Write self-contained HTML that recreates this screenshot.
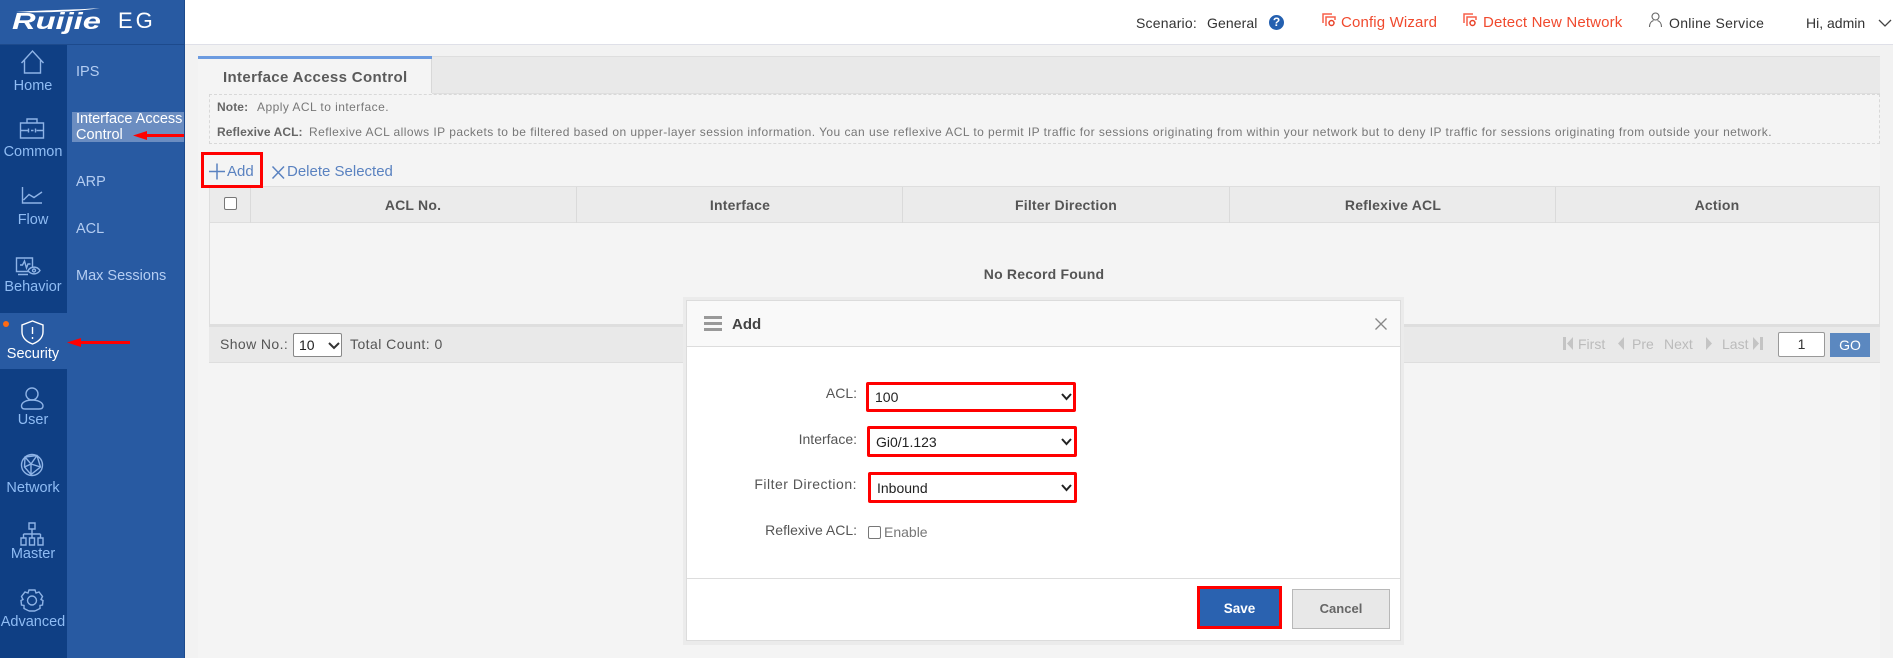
<!DOCTYPE html>
<html><head><meta charset="utf-8"><title>Interface Access Control</title>
<style>
html,body{margin:0;padding:0}
body{width:1893px;height:658px;overflow:hidden;position:relative;background:#f2f2f2;font-family:"Liberation Sans","Noto Sans CJK SC",sans-serif;font-size:14px;color:#555}
.a{position:absolute}
.t{position:absolute;white-space:nowrap;line-height:18px;transform:translateY(-9px)}
.c{transform:translate(-50%,-9px);text-align:center}
.r{transform:translate(-100%,-9px)}
.rail{color:#8fbcf4;font-size:14.5px}
.sub{color:#b4cdf2;font-size:14.5px}
svg{position:absolute;overflow:visible;fill:none}
.ic{stroke:#8eb3e6;stroke-width:1.4}
.th{color:#555;font-weight:bold;font-size:14px;letter-spacing:.2px}
select{position:absolute;appearance:none;-webkit-appearance:none;background:#fff;box-sizing:border-box;border:3px solid #f00;border-radius:2px;font:14px "Liberation Sans",sans-serif;color:#222;padding:0 0 0 6px;margin:0;outline:0}
input{position:absolute;appearance:none;-webkit-appearance:none;box-sizing:border-box;margin:0;padding:0}
.lbl{color:#555;font-size:14px}
.chev{stroke:#222;stroke-width:2}
.red{color:#f04a2e;font-size:15px;letter-spacing:.15px}
.note{font-size:12px;color:#777;letter-spacing:.45px}
.noteb{font-weight:bold;font-size:12px;color:#666;letter-spacing:.1px}
</style></head><body>

<!-- sidebar -->
<div class="a" style="left:0;top:0;width:184px;height:658px;background:#285aa2;border-right:1px solid #1d4a8c"></div>
<div class="a" style="left:0;top:44px;width:184px;height:1px;background:#1d4a8c"></div>
<div class="a" style="left:0;top:45px;width:67px;height:268px;background:#0f3f84"></div>
<div class="a" style="left:0;top:369px;width:67px;height:289px;background:#0f3f84"></div>

<div class="t" style="left:12px;top:21px;font:italic bold 23px/30px 'Liberation Sans',sans-serif;color:#fff;transform:translateY(-15px) scaleX(1.42);transform-origin:0 50%">Ruijie</div>
<svg style="left:0;top:0" width="110" height="20"><path d="M16 12 C40 10 75 10 100 8 C75 12 40 13 16 12Z" fill="#fff"/></svg>
<div class="t" style="left:118px;top:21px;font-size:22px;line-height:24px;color:#fff;letter-spacing:3px;transform:translateY(-12px)">EG</div>

<!-- rail icons -->
<svg class="ic" style="left:0;top:0" width="67" height="658">
<path d="M21.5 63 L32.5 51 L43.5 63 M24.5 60 V73 H40.500 V60"/>
<path d="M20.5 123 H43.5 V138 H20.5 Z M27 123 V119 H37 V123 M20.5 130.5 H28 M31 130.5 H33.5 M36.5 130.5 H43.5 M28.5 128.5 V132.5 M35.5 128.5 V132.5"/>
<path d="M22.5 187 V203 H42 M23.5 200 L29 194.5 L34 197.5 L42 192"/>
<path d="M16.500 258 H32.500 V271.500 H16.500 Z M20 265 H22.500 L24.500 261 L26.500 268 L28 264 H30.500 M18 274.500 H28" />
<path d="M28 270.500 C31 266 37 266 40 270.500 C37 275 31 275 28 270.500Z" fill="#0f3f84"/><circle cx="34" cy="270.500" r="1.500"/>
<path style="stroke:#fff" d="M32.5 321 L43 325 V332 C43 338 38 342 32.5 344 C27 342 22 338 22 332 V325 Z M32.5 327 V334 M32.5 337 V339"/>
<circle cx="32" cy="394" r="6"/>
<path d="M21.5 406 C21.5 402 27 400 32 400 C37 400 43 402 43 406 C43 408.5 41 409 39 409 H25 C23 409 21.5 408.500 21.5 406Z"/>
<circle cx="32" cy="465" r="10.500"/>
<path d="M25 457 L37 455.500 L40.500 467 L31 474.500 L24.500 467 Z M25 457 L31 464 L37 455.500 M31 464 L40.500 467 M31 464 L24.500 467 M31 464 V474.500"/>
<path d="M29 523 H35 V529 H29 Z M32 529 V534 M23.500 534 H40.500 M23.500 534 V538 M32 534 V538 M40.500 534 V538 M21 538 H26 V545 H21 Z M29.500 538 H34.500 V545 H29.500 Z M38 538 H43 V545 H38 Z"/>
<path d="M29 590 H35 L36 593 L39 592 L42.500 596.500 L41 599.500 L43 600.500 L42.500 605 L40 605.500 L40 608.500 L36 610.500 L34.500 611 H29.500 L28 610.500 L24 608.500 L24 605.500 L21.500 605 L21 600.500 L23 599.500 L21.500 596.500 L25 592 L28 593 Z"/>
<circle cx="32" cy="600.500" r="4.500"/>
</svg>
<div class="a" style="left:3px;top:321px;width:6px;height:6px;border-radius:50%;background:#ff6a13"></div>

<div class="t c rail" style="left:33px;top:86px">Home</div>
<div class="t c rail" style="left:33px;top:152px">Common</div>
<div class="t c rail" style="left:33px;top:220px">Flow</div>
<div class="t c rail" style="left:33px;top:287px">Behavior</div>
<div class="t c rail" style="left:33px;top:354px;color:#fff">Security</div>
<div class="t c rail" style="left:33px;top:420px">User</div>
<div class="t c rail" style="left:33px;top:488px">Network</div>
<div class="t c rail" style="left:33px;top:554px">Master</div>
<div class="t c rail" style="left:33px;top:622px">Advanced</div>

<!-- submenu -->
<div class="a" style="left:72px;top:112px;width:112px;height:30px;background:#6b8dc1"></div>
<div class="t sub" style="left:76px;top:72px">IPS</div>
<div class="t sub" style="left:76px;top:119px;color:#fff">Interface Access</div>
<div class="t sub" style="left:76px;top:135px;color:#fff">Control</div>
<div class="t sub" style="left:76px;top:182px">ARP</div>
<div class="t sub" style="left:76px;top:229px">ACL</div>
<div class="t sub" style="left:76px;top:276px">Max Sessions</div>

<!-- red arrows -->
<svg style="left:0;top:0" width="200" height="400">
<path d="M133 135.500 L147 131 V134 H184 V137 H147 V140 Z" fill="#f00"/>
<path d="M67 342.500 L81 338 V341 H130 V344 H81 V347 Z" fill="#f00"/>
</svg>

<!-- top bar -->
<div class="a" style="left:185px;top:0;width:1708px;height:44px;background:#fff;border-bottom:1px solid #dfe0e8"></div>
<div class="t" style="left:1136px;top:23px;color:#333;font-size:14px;letter-spacing:.2px">Scenario:</div>
<div class="t" style="left:1207px;top:23px;color:#333;font-size:14px;letter-spacing:.1px">General</div>
<div class="a" style="left:1269px;top:15px;width:15px;height:15px;border-radius:50%;background:#2460b0;color:#fff;font:bold 12px/15px 'Liberation Sans',sans-serif;text-align:center">?</div>
<svg style="left:1322px;top:13px" width="15" height="15" stroke="#f7604a" stroke-width="1.500">
<path d="M1 10 V1 H10 M4 13 V4 H13 V7"/><circle cx="9.500" cy="10" r="2.500" stroke="#e8432a"/></svg>
<div class="t red" style="left:1341px;top:23px">Config Wizard</div>
<svg style="left:1463px;top:13px" width="15" height="15" stroke="#f7604a" stroke-width="1.500">
<path d="M1 10 V1 H10 M4 13 V4 H13 V7"/><circle cx="9.500" cy="10" r="2.500" stroke="#e8432a"/></svg>
<div class="t red" style="left:1483px;top:23px">Detect New Network</div>
<svg style="left:1649px;top:12px" width="13" height="16" stroke="#666" stroke-width="1.100">
<circle cx="6.500" cy="4.500" r="3.500"/><path d="M0.500 15 C0.500 11 2 9.500 4.500 8.500 M12.500 15 C12.500 11 11 9.500 8.500 8.500"/></svg>
<div class="t" style="left:1669px;top:23px;color:#333;font-size:14px;letter-spacing:.3px">Online Service</div>
<div class="t" style="left:1806px;top:23px;color:#333;font-size:14px">Hi, admin</div>
<svg style="left:1878px;top:19px" width="14" height="9" stroke="#444" stroke-width="1.300"><path d="M1 1 L7 7 L13 1"/></svg>

<!-- main panel -->
<div class="a" style="left:198px;top:56px;width:1682px;height:602px;background:#f4f4f4"></div>
<div class="a" style="left:432px;top:56px;width:1448px;height:36px;background:#e9e9e9;border-top:1px solid #dedede;box-sizing:content-box;border-bottom:1px solid #dedede"></div>
<div class="a" style="left:198px;top:56px;width:233px;height:37px;background:#f4f4f4;border-right:1px solid #d8d8d8"></div>
<div class="a" style="left:198px;top:56px;width:234px;height:3px;background:#6c9be0"></div>
<div class="t" style="left:223px;top:78px;font-weight:bold;font-size:15px;color:#5a5a5a;letter-spacing:.35px">Interface Access Control</div>

<div class="a" style="left:209px;top:94px;width:1671px;height:50px;box-sizing:border-box;border:1px dashed #d8d8d8;"></div>
<div class="t noteb" style="left:217px;top:107px">Note:</div>
<div class="t note" style="left:257px;top:107px">Apply ACL to interface.</div>
<div class="t noteb" style="left:217px;top:132px">Reflexive ACL:</div>
<div class="t note" style="left:309px;top:132px">Reflexive ACL allows IP packets to be filtered based on upper-layer session information. You can use reflexive ACL to permit IP traffic for sessions originating from within your network but to deny IP traffic for sessions originating from outside your network.</div>

<!-- toolbar -->
<div class="a" style="left:201px;top:152px;width:62px;height:36px;box-sizing:border-box;border:3px solid #f00;z-index:3"></div>
<svg style="left:209px;top:163px" width="16" height="18" stroke="#5a82c0" stroke-width="1.500"><path d="M0 8.500 H16 M8 0.500 V16.500"/></svg>
<div class="t" style="left:227px;top:172px;color:#5a82c0;font-size:15px">Add</div>
<svg style="left:272px;top:166px" width="12" height="13" stroke="#5a82c0" stroke-width="1.500"><path d="M0.500 0.500 L12 12.500 M12 0.500 L0.500 12.500"/></svg>
<div class="t" style="left:287px;top:172px;color:#5a82c0;font-size:15px">Delete Selected</div>

<!-- table -->
<div class="a" style="left:209px;top:186px;width:1671px;height:37px;box-sizing:border-box;background:#ebebeb;border:1px solid #dedede"></div>
<div class="a" style="left:209px;top:223px;width:1px;height:101px;background:#dedede"></div>
<div class="a" style="left:1879px;top:223px;width:1px;height:101px;background:#dedede"></div>
<div class="a" style="left:250px;top:187px;width:1px;height:36px;background:#dadada"></div>
<div class="a" style="left:576px;top:187px;width:1px;height:36px;background:#dadada"></div>
<div class="a" style="left:902px;top:187px;width:1px;height:36px;background:#dadada"></div>
<div class="a" style="left:1229px;top:187px;width:1px;height:36px;background:#dadada"></div>
<div class="a" style="left:1555px;top:187px;width:1px;height:36px;background:#dadada"></div>
<input type="checkbox" style="left:224px;top:197px;width:13px;height:13px;border:1px solid #777;border-radius:2px;background:#fff">
<div class="t c th" style="left:413px;top:205px">ACL No.</div>
<div class="t c th" style="left:740px;top:205px">Interface</div>
<div class="t c th" style="left:1066px;top:205px">Filter Direction</div>
<div class="t c th" style="left:1393px;top:205px">Reflexive ACL</div>
<div class="t c th" style="left:1717px;top:205px">Action</div>
<div class="t c th" style="left:1044px;top:274px">No Record Found</div>

<!-- table footer -->
<div class="a" style="left:209px;top:324px;width:1671px;height:39px;box-sizing:border-box;background:#e9e9e9;border-top:3px solid #dedede;border-bottom:1px solid #dedede"></div>
<div class="t lbl" style="left:220px;top:344px;letter-spacing:.4px">Show No.:</div>
<select style="left:293px;top:333px;width:49px;height:24px;border:1px solid #888;font-size:14px;padding-left:5px"><option>10</option></select>
<svg style="left:328px;top:342px" width="12" height="8" class="chev"><path d="M1 1 L6 6 L11 1" stroke="#333" stroke-width="2"/></svg>
<div class="t lbl" style="left:350px;top:344px;letter-spacing:.45px">Total Count: 0</div>

<svg style="left:1563px;top:337px" width="205" height="14" fill="#c4c4c4">
<rect x="0" y="0" width="3" height="13" fill="#c4c4c4"/><path d="M10 0 V13 L4 6.500Z" fill="#c4c4c4"/>
<path d="M61 0 V13 L55 6.500Z" fill="#c4c4c4"/>
<path d="M143 0 V13 L149 6.500Z" fill="#c4c4c4"/>
<path d="M190 0 V13 L196 6.500Z" fill="#c4c4c4"/><rect x="197" y="0" width="3" height="13" fill="#c4c4c4"/></svg>
<div class="t" style="left:1578px;top:344px;color:#bbb;font-size:14px">First</div>
<div class="t" style="left:1632px;top:344px;color:#bbb;font-size:14px">Pre</div>
<div class="t" style="left:1664px;top:344px;color:#bbb;font-size:14px">Next</div>
<div class="t" style="left:1722px;top:344px;color:#bbb;font-size:14px">Last</div>
<div class="a" style="left:1778px;top:332px;width:47px;height:25px;box-sizing:border-box;background:#fff;border:1px solid #999;border-radius:2px;text-align:center;font-size:14px;line-height:23px;color:#333">1</div>
<div class="a" style="left:1830px;top:333px;width:40px;height:24px;background:#5b88c0;color:#fff;text-align:center;font-size:14px;line-height:24px">GO</div>

<!-- modal -->
<div class="a" style="left:683px;top:297px;width:721px;height:348px;background:#ebebeb"></div>
<div class="a" style="left:686px;top:300px;width:715px;height:341px;box-sizing:border-box;background:#fff;border:1px solid #dcdcdc"></div>
<div class="a" style="left:687px;top:301px;width:713px;height:45px;background:#f9f9f9;border-bottom:1px solid #ddd"></div>
<div class="a" style="left:687px;top:578px;width:713px;height:1px;background:#ddd"></div>
<svg style="left:704px;top:316px" width="18" height="15" fill="#999"><rect width="18" height="3" y="0" fill="#999"/><rect width="18" height="3" y="6" fill="#999"/><rect width="18" height="3" y="12" fill="#999"/></svg>
<div class="t" style="left:732px;top:325px;font-weight:bold;font-size:15px;color:#444">Add</div>
<svg style="left:1375px;top:318px" width="12" height="12" stroke="#888" stroke-width="1.300"><path d="M0.500 0.500 L11.500 11.500 M11.500 0.500 L0.500 11.500"/></svg>

<div class="t r lbl" style="left:857px;top:393px">ACL:</div>
<div class="t r lbl" style="left:857px;top:439px">Interface:</div>
<div class="t r lbl" style="left:857px;top:484px;letter-spacing:.5px">Filter Direction:</div>
<div class="t r lbl" style="left:857px;top:530px">Reflexive ACL:</div>

<select style="left:866px;top:382px;width:210px;height:30px"><option>100</option></select>
<select style="left:867px;top:426px;width:210px;height:31px"><option>Gi0/1.123</option></select>
<select style="left:868px;top:472px;width:209px;height:31px"><option>Inbound</option></select>
<svg style="left:1061px;top:393px" width="11" height="8" class="chev"><path d="M1 1 L5.500 6 L10 1" stroke="#222" stroke-width="2"/></svg>
<svg style="left:1061px;top:438px" width="11" height="8" class="chev"><path d="M1 1 L5.500 6 L10 1" stroke="#222" stroke-width="2"/></svg>
<svg style="left:1061px;top:484px" width="11" height="8" class="chev"><path d="M1 1 L5.500 6 L10 1" stroke="#222" stroke-width="2"/></svg>

<input type="checkbox" style="left:868px;top:526px;width:13px;height:13px;border:1px solid #777;border-radius:2px;background:#fff">
<div class="t" style="left:884px;top:532px;color:#777;font-size:14px">Enable</div>

<div class="a" style="left:1197px;top:586px;width:85px;height:43px;box-sizing:border-box;border:3px solid #f00;background:#2a62b0;color:#fff;text-align:center;font:bold 13.5px/39px 'Liberation Sans',sans-serif">Save</div>
<div class="a" style="left:1292px;top:589px;width:98px;height:40px;box-sizing:border-box;border:1px solid #b8b8b8;background:#e8e8e8;color:#666;text-align:center;font:bold 13px/38px 'Liberation Sans',sans-serif">Cancel</div>
</body></html>
